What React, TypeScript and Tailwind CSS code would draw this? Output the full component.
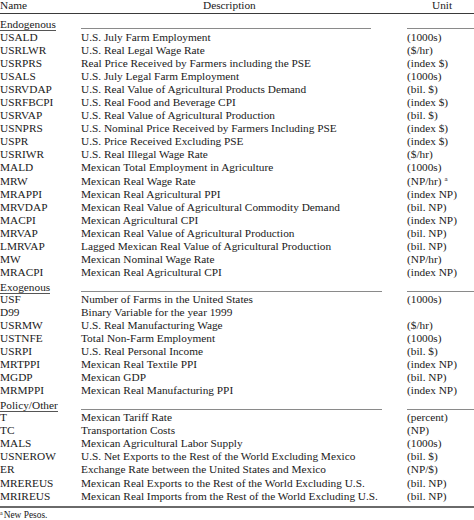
type Row = [string, string, string];

const sections: { title: string; line: string; rows: Row[] }[] = [
  {
    title: "Endogenous",
    line: "w-[290px]",
    rows: [
      ["USALD", "U.S. July Farm Employment", "(1000s)"],
      ["USRLWR", "U.S. Real Legal Wage Rate", "($/hr)"],
      ["USRPRS", "Real Price Received by Farmers including the PSE", "(index $)"],
      ["USALS", "U.S. July Legal Farm Employment", "(1000s)"],
      ["USRVDAP", "U.S. Real Value of Agricultural Products Demand", "(bil. $)"],
      ["USRFBCPI", "U.S. Real Food and Beverage CPI", "(index $)"],
      ["USRVAP", "U.S. Real Value of Agricultural Production", "(bil. $)"],
      ["USNPRS", "U.S. Nominal Price Received by Farmers Including PSE", "(index $)"],
      ["USPR", "U.S. Price Received Excluding PSE", "(index $)"],
      ["USRIWR", "U.S. Real Illegal Wage Rate", "($/hr)"],
      ["MALD", "Mexican Total Employment in Agriculture", "(1000s)"],
      ["MRW", "Mexican Real Wage Rate", "(NP/hr)"],
      ["MRAPPI", "Mexican Real Agricultural PPI", "(index NP)"],
      ["MRVDAP", "Mexican Real Value of Agricultural Commodity Demand", "(bil. NP)"],
      ["MACPI", "Mexican Agricultural CPI", "(index NP)"],
      ["MRVAP", "Mexican Real Value of Agricultural Production", "(bil. NP)"],
      ["LMRVAP", "Lagged Mexican Real Value of Agricultural Production", "(bil. NP)"],
      ["MW", "Mexican Nominal Wage Rate", "(NP/hr)"],
      ["MRACPI", "Mexican Real Agricultural CPI", "(index NP)"],
    ],
  },
  {
    title: "Exogenous",
    line: "w-[301px]",
    rows: [
      ["USF", "Number of Farms in the United States", "(1000s)"],
      ["D99", "Binary Variable for the year 1999", ""],
      ["USRMW", "U.S. Real Manufacturing Wage", "($/hr)"],
      ["USTNFE", "Total Non-Farm Employment", "(1000s)"],
      ["USRPI", "U.S. Real Personal Income", "(bil. $)"],
      ["MRTPPI", "Mexican Real Textile PPI", "(index NP)"],
      ["MGDP", "Mexican GDP", "(bil. NP)"],
      ["MRMPPI", "Mexican Real Manufacturing PPI", "(index NP)"],
    ],
  },
  {
    title: "Policy/Other",
    line: "w-[301px]",
    rows: [
      ["T", "Mexican Tariff Rate", "(percent)"],
      ["TC", "Transportation Costs", "(NP)"],
      ["MALS", "Mexican Agricultural Labor Supply", "(1000s)"],
      ["USNEROW", "U.S. Net Exports to the Rest of the World Excluding Mexico", "(bil. $)"],
      ["ER", "Exchange Rate between the United States and Mexico", "(NP/$)"],
      ["MREREUS", "Mexican Real Exports to the Rest of the World Excluding U.S.", "(bil. NP)"],
      ["MRIREUS", "Mexican Real Imports from the Rest of the World Excluding U.S.", "(bil. NP)"],
    ],
  },
];

const cols = "grid grid-cols-[81px_326px_1fr]";

export default function App() {
  return (
    <div
      className="w-[474px] h-[520px] overflow-hidden bg-white text-[#1a1a1a] text-[11.3px]"
      style={{ fontFamily: '"Liberation Serif", "Times New Roman", serif' }}
    >
      {/* column headings */}
      <div className={`${cols} h-[14px] leading-[11px] border-b border-[#3a3a3a] mb-[2px]`}>
        <div>Name</div>
        <div className="pl-[122px]">Description</div>
        <div className="pl-[25px]">Unit</div>
      </div>

      {sections.map((s, i) => (
        <div key={s.title}>
          <div className={`${cols} h-[14px] ${i === 0 ? "mb-[1px]" : ""}`}>
            <div>
              <span className="inline-block leading-[12px] border-b border-[#555]">{s.title}</span>
            </div>
            <div>
              <div className={`${s.line} h-[13px] border-b border-[#8a8a8a]`} />
            </div>
            <div>
              <div className="h-[13px] border-b border-[#8a8a8a]" />
            </div>
          </div>
          {s.rows.map(([name, desc, unit]) => (
            <div key={name} className={`${cols} h-[13.05px] leading-[13px] whitespace-nowrap`}>
              <div>{name}</div>
              <div>{desc}</div>
              <div>
                {unit}
                {name === "MRW" && <sup className="text-[7px] ml-[3px]">a</sup>}
              </div>
            </div>
          ))}
        </div>
      ))}

      <div className="mt-[3px] border-t-2 border-[#6a6a6a] pt-[2px] text-[9.4px] leading-[11px]">
        <sup className="text-[6px] mr-[1px]">a</sup>New Pesos.
      </div>
    </div>
  );
}
